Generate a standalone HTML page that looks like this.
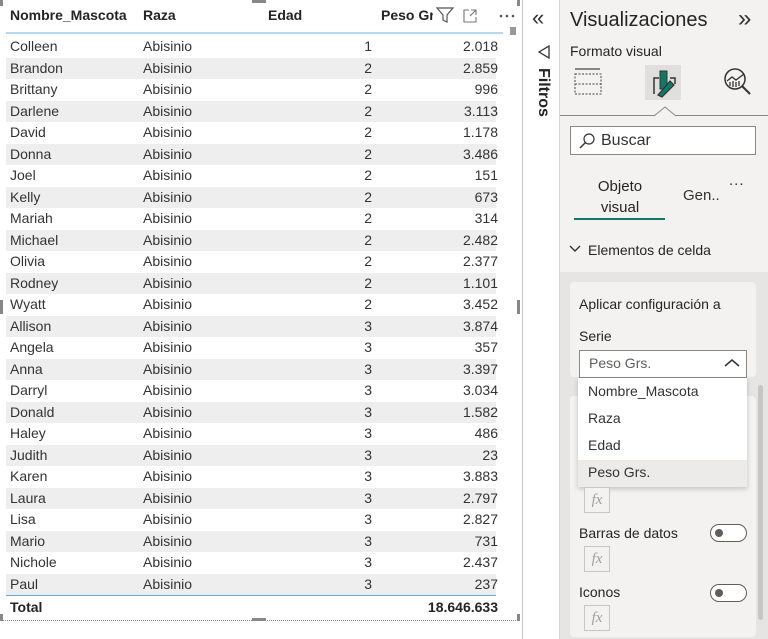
<!DOCTYPE html>
<html><head><meta charset="utf-8"><style>
*{margin:0;padding:0;box-sizing:border-box}
body{width:768px;height:639px;overflow:hidden;background:#fff;font-family:"Liberation Sans",sans-serif;position:relative;color:#252423}
.a{position:absolute;white-space:nowrap}
.row{position:absolute;left:6px;width:490px;height:21.5px;font-size:14px;line-height:21.5px;color:#333}
.row.g{background:#eeeeee}
.row span{position:absolute}
.c1{left:4px}.c2{left:137px}.c3{right:124px}.c4{right:-2px}
.hd{font-weight:bold;font-size:14px;color:#252423}
.fx{position:absolute;left:584px;width:26px;height:26px;border:1px solid #c8c6c4;background:#f3f2f1;font-family:"Liberation Serif",serif;font-style:italic;color:#a19f9d;font-size:15px;text-align:center;line-height:24px}
.tg{position:absolute;left:710px;width:37px;height:18px;border:1px solid #605e5c;border-radius:9px;background:#fff}
.tg:after{content:"";position:absolute;left:4px;top:4px;width:8px;height:8px;border-radius:50%;background:#605e5c}
</style></head><body>
<div class="a hd" style="left:10px;top:7px">Nombre_Mascota</div>
<div class="a hd" style="left:143px;top:7px">Raza</div>
<div class="a hd" style="left:268px;top:7px">Edad</div>
<div class="a hd" style="left:381px;top:7px;width:52px;overflow:hidden">Peso Grs.</div>
<svg class="a" style="left:434px;top:5px" width="90" height="20"><path d="M3 3h16l-6 7v7l-4-2v-5z" fill="none" stroke="#555" stroke-width="1.2"/><path d="M35 5h-5v12h12v-5M37 5h5v5M42 5l-6 6" fill="none" stroke="#777" stroke-width="1.1"/><circle cx="67" cy="11" r="1.3" fill="#555"/><circle cx="73" cy="11" r="1.3" fill="#555"/><circle cx="79" cy="11" r="1.3" fill="#555"/></svg>
<div class="a" style="left:6px;top:32px;width:497px;height:2px;background:#b3d7f5"></div>
<div class="a" style="left:510px;top:27px;width:6px;height:8px;background:#999"></div>
<div id="rows"></div>
<div class="a" style="left:6px;top:595px;width:490px;height:1px;background:#5fa7e0"></div>
<div class="a hd" style="left:10px;top:599px">Total</div>
<div class="a hd" style="right:270px;top:599px">18.646.633</div>
<div class="a" style="left:2px;top:620px;width:518px;border-top:1px dotted #888"></div>
<div class="a" style="left:0;top:614px;width:3px;height:7px;background:#888"></div>
<div class="a" style="left:517px;top:614px;width:3px;height:7px;background:#888"></div>
<div class="a" style="left:252px;top:618px;width:14px;height:3px;background:#888"></div>
<div class="a" style="left:252px;top:0;width:14px;height:3px;background:#888"></div>
<div class="a" style="left:0;top:0;width:3px;height:6px;background:#888"></div>
<div class="a" style="left:517px;top:0;width:3px;height:6px;background:#888"></div>
<div class="a" style="left:517px;top:300px;width:3px;height:14px;background:#888"></div>
<div class="a" style="left:0;top:300px;width:3px;height:14px;background:#888"></div>
<div class="a" style="left:522px;top:0;width:1px;height:639px;background:#c8c6c4"></div>
<div class="a" style="left:559px;top:0;width:1px;height:639px;background:#d8d6d4"></div>
<div class="a" style="left:532px;top:5px;font-size:22px;color:#333">«</div>
<svg class="a" style="left:536px;top:44px" width="16" height="16"><path d="M13 2v12L3 8z" fill="none" stroke="#333" stroke-width="1.3"/></svg>
<div class="a" style="left:532px;top:68px;font-size:16px;font-weight:bold;transform-origin:0 0;transform:translate(20px,0) rotate(90deg)">Filtros</div>
<div class="a" style="left:560px;top:0;width:208px;height:272px;background:#f3f2f1"></div>
<div class="a" style="left:560px;top:272px;width:208px;height:367px;background:#e6e5e4"></div>
<div class="a" style="left:570px;top:9px;font-size:20px;color:#252423">Visualizaciones</div>
<div class="a" style="left:738px;top:5px;font-size:24px;color:#333">»</div>
<div class="a" style="left:570px;top:43px;font-size:14px;color:#252423">Formato visual</div>
<svg class="a" style="left:572px;top:66px" width="34" height="34"><path d="M3 3h25" stroke="#444" stroke-width="1.3"/><rect x="3" y="8" width="26" height="20" fill="none" stroke="#444" stroke-dasharray="2 1.5"/><path d="M3 18h26" stroke="#444" stroke-dasharray="2 1.5"/></svg>
<div class="a" style="left:645px;top:65px;width:36px;height:35px;background:#e1dfdd"></div>
<svg class="a" style="left:645px;top:65px" width="36" height="35"><path d="M9 29V13h5M25 13h5v6" fill="none" stroke="#333" stroke-width="1.5"/><rect x="15" y="6" width="7" height="18" fill="#117865" stroke="#333"/><path d="M13 30l12-14 4 4-12 12z" fill="#117865" stroke="#333" stroke-width="1.2"/></svg>
<svg class="a" style="left:722px;top:66px" width="32" height="32"><circle cx="13" cy="13" r="10" fill="none" stroke="#333" stroke-width="1.5"/><path d="M20 20l8 8" stroke="#333" stroke-width="2"/><path d="M5 15l5-4 4 3 8-6M8 20v-4M11 21v-6M14 21v-5M17 20v-5" fill="none" stroke="#333" stroke-width="1.3"/></svg>
<div class="a" style="left:560px;top:115px;width:208px;height:1px;background:#8a8886"></div>
<svg class="a" style="left:654px;top:106px" width="22" height="11"><path d="M0 10L11 1l11 9" fill="#f3f2f1" stroke="#8a8886"/></svg>
<div class="a" style="left:570px;top:126px;width:186px;height:29px;border:1px solid #8a8886;background:#fff"></div>
<svg class="a" style="left:578px;top:132px" width="18" height="18"><circle cx="11" cy="7" r="5" fill="none" stroke="#333" stroke-width="1.2"/><path d="M7.5 10.5L2 16" stroke="#333" stroke-width="1.4"/></svg>
<div class="a" style="left:601px;top:132px;font-size:16px;color:#333">Buscar</div>
<div class="a" style="left:574px;top:176px;width:92px;text-align:center;font-size:15px;line-height:21px;color:#252423">Objeto<br>visual</div>
<div class="a" style="left:574px;top:218px;width:91px;height:2px;background:#117865"></div>
<div class="a" style="left:683px;top:187px;font-size:15px;color:#333">Gen..</div>
<div class="a" style="left:729px;top:172px;font-size:15px;color:#333;letter-spacing:1px">...</div>
<svg class="a" style="left:569px;top:244px" width="12" height="10"><path d="M1 2l5 5 5-5" fill="none" stroke="#333" stroke-width="1.4"/></svg>
<div class="a" style="left:588px;top:242px;font-size:14px;color:#252423">Elementos de celda</div>
<div class="a" style="left:570px;top:282px;width:186px;height:95px;background:#f3f2f1;border-radius:4px"></div>
<div class="a" style="left:570px;top:396px;width:186px;height:241px;background:#f3f2f1;border-radius:4px"></div>
<div class="a" style="left:758px;top:385px;width:5px;height:235px;background:#c8c6c4;border-radius:3px"></div>
<div class="a" style="left:579px;top:296px;font-size:14px;color:#252423">Aplicar configuración a</div>
<div class="a" style="left:579px;top:328px;font-size:14px;color:#252423">Serie</div>
<div class="a" style="left:579px;top:350px;width:168px;height:28px;border:1px solid #8a8886;background:#fff"></div>
<div class="a" style="left:589px;top:355px;font-size:14px;color:#605e5c">Peso Grs.</div>
<svg class="a" style="left:724px;top:358px" width="16" height="10"><path d="M1 8l7-6 7 6" fill="none" stroke="#333" stroke-width="1.5"/></svg>
<div class="a" style="left:578px;top:378px;width:169px;height:109px;background:#fff;box-shadow:0 2px 5px rgba(0,0,0,.2)"></div>
<div class="a" style="left:578px;top:460px;width:169px;height:27px;background:#edebe9"></div>
<div class="a" style="left:588px;top:383px;font-size:14px;color:#333">Nombre_Mascota</div>
<div class="a" style="left:588px;top:410px;font-size:14px;color:#333">Raza</div>
<div class="a" style="left:588px;top:437px;font-size:14px;color:#333">Edad</div>
<div class="a" style="left:588px;top:464px;font-size:14px;color:#333">Peso Grs.</div>
<div class="fx" style="top:487px">fx</div>
<div class="a" style="left:579px;top:525px;font-size:14px;color:#252423">Barras de datos</div>
<div class="tg" style="top:524px"></div>
<div class="fx" style="top:546px">fx</div>
<div class="a" style="left:579px;top:584px;font-size:14px;color:#252423">Iconos</div>
<div class="tg" style="top:584px"></div>
<div class="fx" style="top:605px">fx</div>
<script>
var d=[["Colleen",1,"2.018"],["Brandon",2,"2.859"],["Brittany",2,"996"],["Darlene",2,"3.113"],["David",2,"1.178"],["Donna",2,"3.486"],["Joel",2,"151"],["Kelly",2,"673"],["Mariah",2,"314"],["Michael",2,"2.482"],["Olivia",2,"2.377"],["Rodney",2,"1.101"],["Wyatt",2,"3.452"],["Allison",3,"3.874"],["Angela",3,"357"],["Anna",3,"3.397"],["Darryl",3,"3.034"],["Donald",3,"1.582"],["Haley",3,"486"],["Judith",3,"23"],["Karen",3,"3.883"],["Laura",3,"2.797"],["Lisa",3,"2.827"],["Mario",3,"731"],["Nichole",3,"2.437"],["Paul",3,"237"]];
var h="";d.forEach(function(r,i){h+='<div class="row'+(i%2?' g':'')+'" style="top:'+(36+i*21.5)+'px"><span class="c1">'+r[0]+'</span><span class="c2">Abisinio</span><span class="c3">'+r[1]+'</span><span class="c4">'+r[2]+'</span></div>';});
document.getElementById("rows").innerHTML=h;
</script>
</body></html>
